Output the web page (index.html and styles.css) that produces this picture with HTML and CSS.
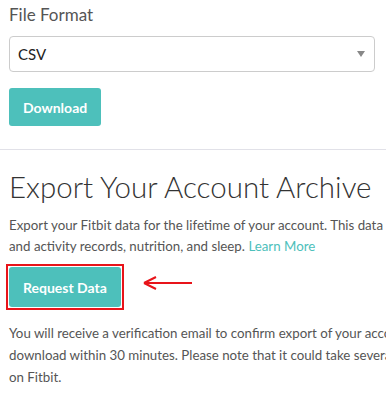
FILE: index.html
```html
<!DOCTYPE html>
<html lang="en">
<head>
	<meta charset="UTF-8">
	<title>Export Data</title>
	<link rel="stylesheet" href="styles.css">
</head>
<body>
	<div class='page'>
		<div class='format'>
			<label class='label'>File Format</label>
			<div class='select'>
				<span>CSV</span>
				<span class='caret'></span>
			</div>
			<button class='btn'>Download</button>
		</div>

		<div class='archive'>
			<h1>Export Your Account Archive</h1>
			<p class='text'>Export your Fitbit data for the lifetime of your account. This data includes your profile, body<br>and activity records, nutrition, and sleep. <a href='#'>Learn More</a></p>
			<div class='request'>
				<div class='marked'>
					<button class='btn big'>Request Data</button>
				</div>
				<svg class='arrow' width='52' height='14' viewBox='0 0 52 14'>
					<path d='M2 7 H50 M2 7 L14 1 M2 7 L14 13' stroke='#e8141a' stroke-width='2' fill='none'/>
				</svg>
			</div>
			<p class='text note'>You will receive a verification email to confirm export of your account data. The file will be ready to<br>download within 30 minutes. Please note that it could take several days for the data to be available<br>on Fitbit.</p>
		</div>
	</div>
</body>
</html>
```

FILE: styles.css
```css
*{
	box-sizing: border-box;
	margin: 0px;
	padding: 0px;
}

body{
	overflow: hidden;
	background: #fff;
	font-family: Lato, "Open Sans", sans-serif;
	color: #444;
}

.page{
	width: 386px;
}

.format{
	padding: 4px 11px 23px 9px;
	border-bottom: 1px solid #e1e1e8;
}

.label{
	display: block;
	font-size: 17px;
	line-height: 21px;
	color: #555;
}

.select{
	display: flex;
	justify-content: space-between;
	align-items: center;
	margin-top: 11px;
	height: 36px;
	padding: 0 9px 0 8px;
	border: 1px solid #ccc;
	border-radius: 4px;
	font-size: 15px;
	color: #222;
}

.caret{
	width: 0;
	height: 0;
	border-left: 4px solid transparent;
	border-right: 4px solid transparent;
	border-top: 6px solid #888;
}

.btn{
	display: block;
	margin-top: 16px;
	height: 38px;
	padding: 0 14px;
	border: none;
	border-radius: 3px;
	background-color: #4dc0bb;
	color: #fff;
	font-family: Lato, sans-serif;
	font-weight: bold;
	font-size: 14px;
	cursor: pointer;
}

.archive{
	padding: 19px 0 0 9px;
	white-space: nowrap;
}

h1{
	font-weight: 300;
	font-size: 29.5px;
	line-height: 36px;
	color: #333;
}

.text{
	margin-top: 10px;
	font-size: 13.3px;
	line-height: 21px;
	color: #555;
}

.text a{
	color: #4dc0bb;
	text-decoration: none;
}

.request{
	display: flex;
	align-items: center;
	margin-top: 7px;
	margin-left: -3px;
}

.marked{
	border: 2px solid #e8141a;
	padding: 1px;
}

.marked .btn{
	margin-top: 0;
	height: 40px;
}

.arrow{
	margin-left: 18px;
	margin-top: -8px;
}

.note{
	margin-top: 12px;
	line-height: 22px;
}
```
